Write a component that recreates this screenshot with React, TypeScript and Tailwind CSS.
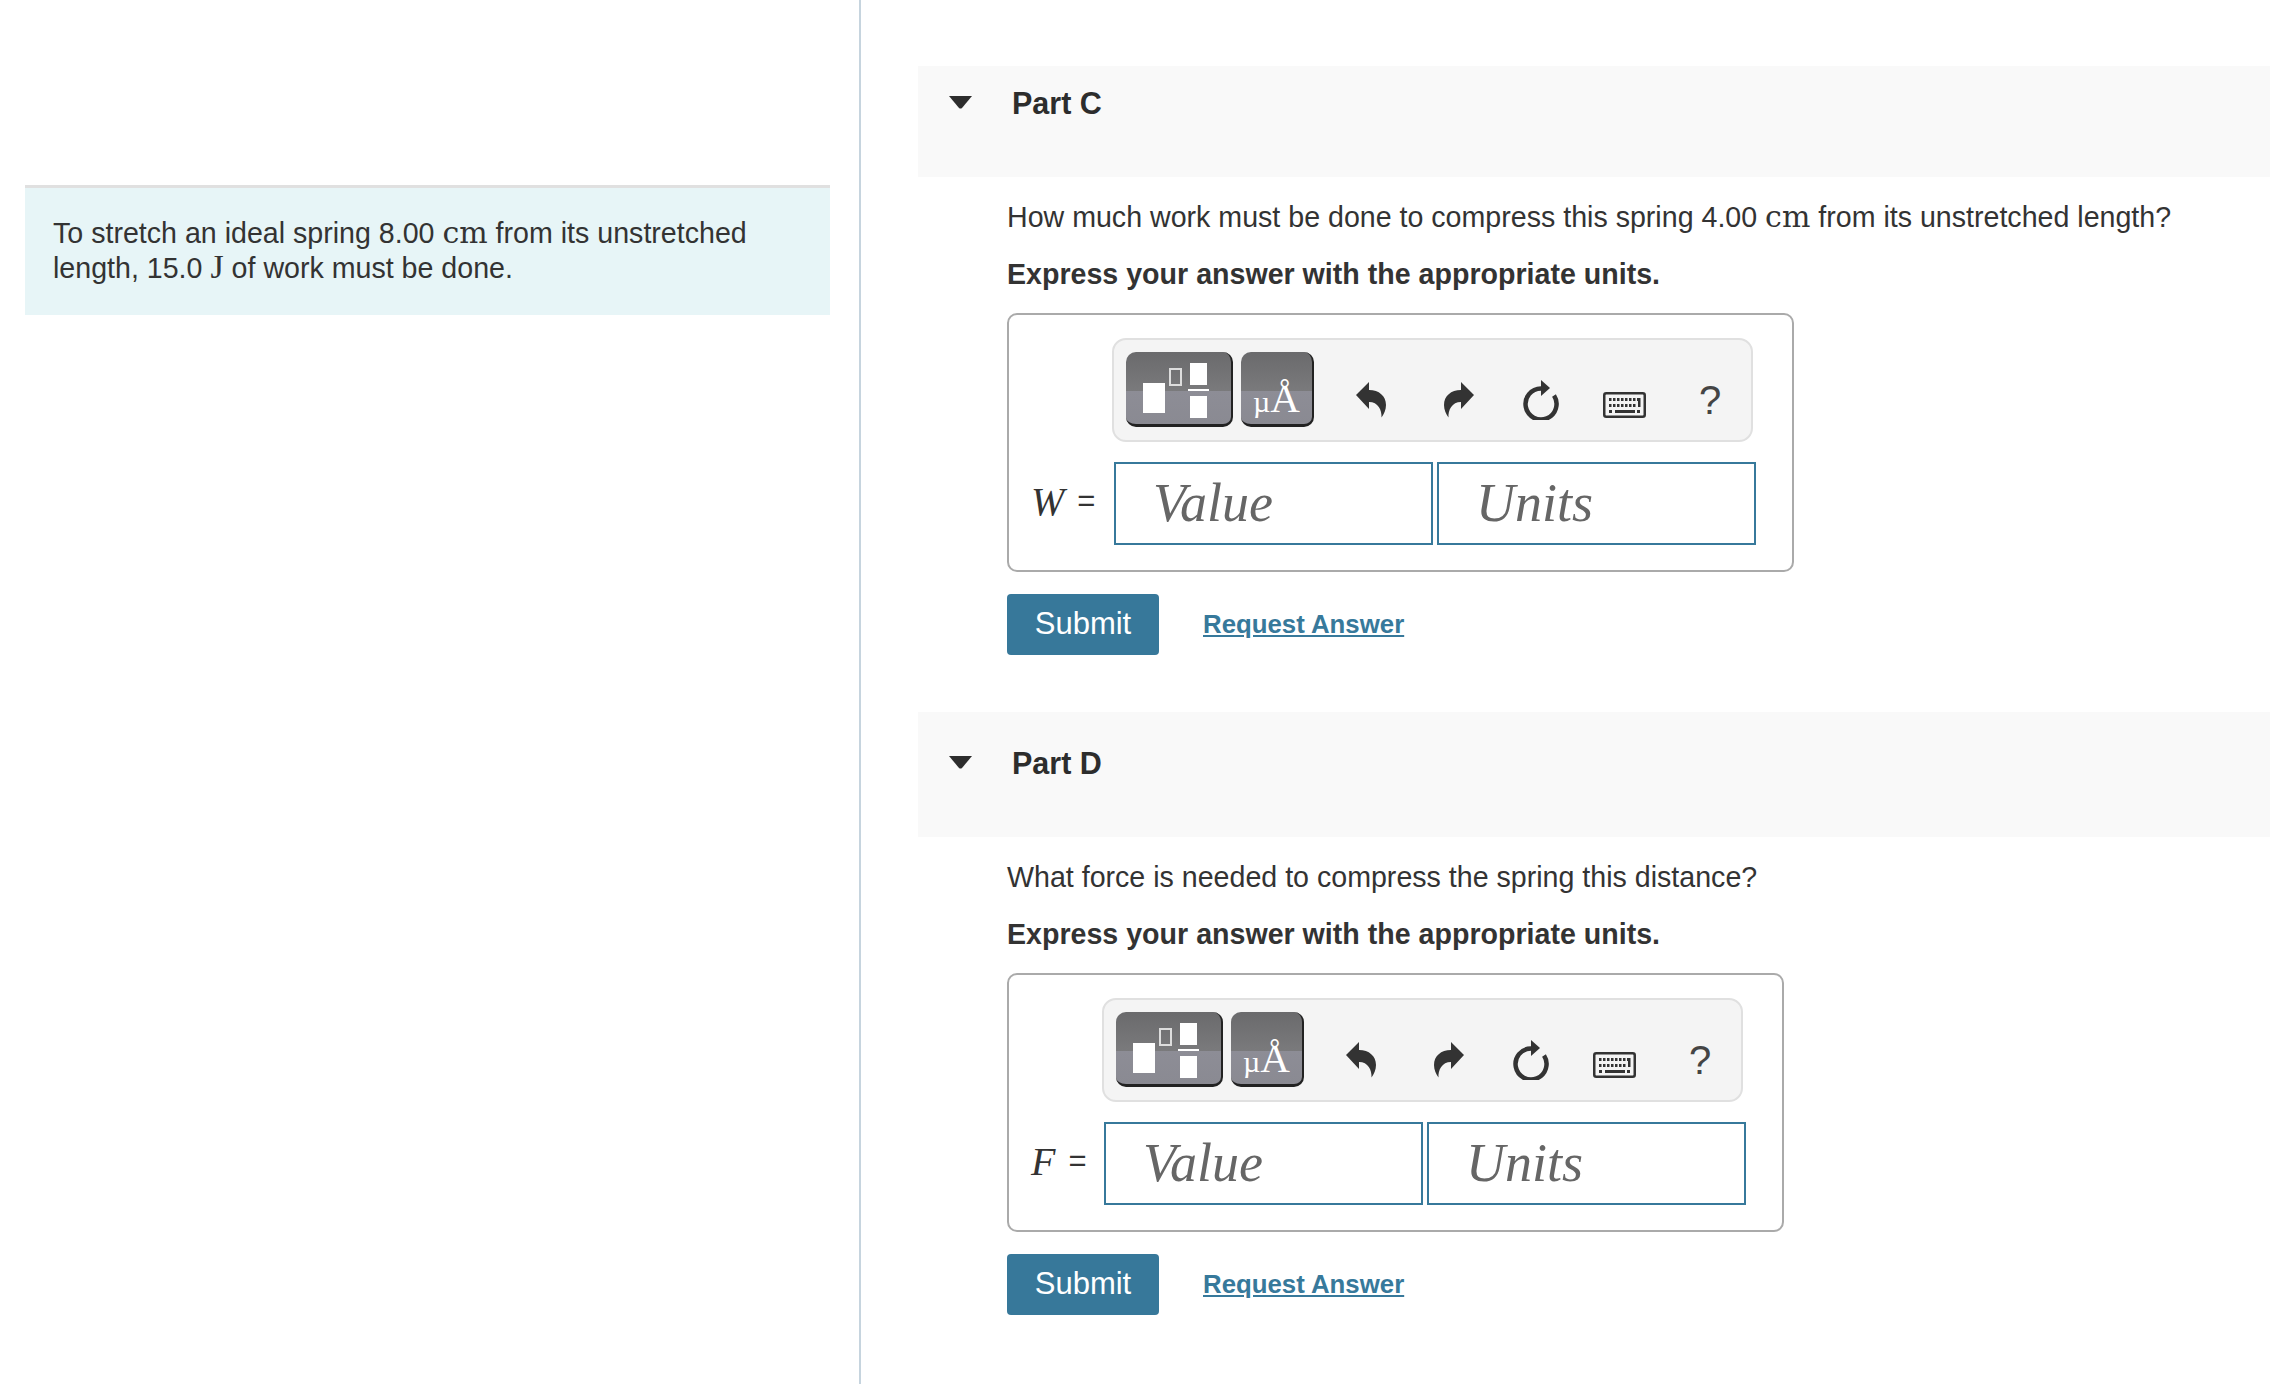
const sans = "font-['Liberation_Sans',Arial,sans-serif]";

function Cm() {
  return <span className="font-['DejaVu_Serif',serif] text-[30px] leading-[0]">cm</span>;
}

function Joule() {
  return <span className="font-['Liberation_Serif',serif] text-[34px] leading-[0]">J</span>;
}

function TemplatesButton() {
  return (
    <div className="relative h-[75px] w-[107px] rounded-[10px] border-b-[3px] border-r-2 border-[#222] bg-[linear-gradient(#6a6a6c,#7a7a7c_54%,#8d8d96_54%,#8a8a92)]">
      <div className="absolute left-[17px] top-[31px] h-[30px] w-[22px] bg-white" />
      <div className="absolute left-[43px] top-[16px] h-[18px] w-[13px] border-2 border-[#ddd]" />
      <div className="absolute left-[64px] top-[11px] h-[22px] w-[17px] bg-white" />
      <div className="absolute left-[62px] top-[37px] h-[2px] w-[21px] bg-white" />
      <div className="absolute left-[64px] top-[44px] h-[22px] w-[17px] bg-white" />
    </div>
  );
}

function SymbolsButton() {
  return (
    <div className="flex h-[75px] w-[73px] items-baseline justify-center rounded-[10px] border-b-[3px] border-r-2 border-[#222] bg-[linear-gradient(#6a6a6c,#7a7a7c_54%,#8d8d96_54%,#8a8a92)] pt-[26px] font-['Liberation_Serif',serif] leading-none text-white">
      <span className="text-[30px]">µ</span>
      <span className="text-[41px]">Å</span>
    </div>
  );
}

function UndoIcon({ flip }: { flip?: boolean }) {
  return (
    <svg className={flip ? "h-[36px] w-[30px] -scale-x-100" : "h-[36px] w-[30px]"} viewBox="0 0 30 36">
      <path d="M0 13 13 0v8c10 0 17 6 17 15 0 5-2 9-4.500 12.500C26 28 22 20 13 20v7z" fill="#333" />
    </svg>
  );
}

function ReloadIcon() {
  return (
    <svg className="h-[40px] w-[36px]" viewBox="0 0 36 40" fill="none">
      <path d="M18 8.500A15.500 15.500 0 1 0 31 15.500" stroke="#333" strokeWidth="4.500" />
      <path d="M18 0l9 8-9 8z" fill="#333" />
    </svg>
  );
}

function KeyboardIcon() {
  const top = [6, 10, 14, 18, 22, 26, 30, 34];
  const mid = [6, 10, 14, 18, 22, 26];
  return (
    <svg className="h-[26px] w-[43px]" viewBox="0 0 43 26">
      <rect x="1.250" y="1.250" width="40.500" height="23.500" rx="2" fill="none" stroke="#333" strokeWidth="2.500" />
      {top.map((x) => (
        <rect key={x} x={x} y="6" width="2.500" height="3" fill="#333" />
      ))}
      {mid.map((x) => (
        <rect key={x} x={x} y="12" width="2.500" height="3" fill="#333" />
      ))}
      <path d="M30 12h2.500v3H30zM35 6h2.500v9H35z" fill="#333" />
      <rect x="6" y="18" width="3" height="3" fill="#333" />
      <rect x="12" y="18" width="20" height="3" fill="#333" />
      <rect x="34" y="18" width="3" height="3" fill="#333" />
    </svg>
  );
}

function Toolbar() {
  return (
    <div className="-ml-[2px] flex h-[104px] w-[641px] items-start rounded-[14px] border-2 border-[#e0e0e0] bg-[#f4f4f4] pl-[12px] pt-[12px]">
      <TemplatesButton />
      <div className="ml-[8px]">
        <SymbolsButton />
      </div>
      <div className="ml-[42px] mt-[30px]">
        <UndoIcon />
      </div>
      <div className="ml-[58px] mt-[30px]">
        <UndoIcon flip />
      </div>
      <div className="ml-[49px] mt-[28px]">
        <ReloadIcon />
      </div>
      <div className="ml-[44px] mt-[40px]">
        <KeyboardIcon />
      </div>
      <div className="ml-[53px] mt-[26px] font-['Liberation_Sans',sans-serif] text-[40px] leading-[44px] text-[#444]">?</div>
    </div>
  );
}

function AnswerInput({ placeholder }: { placeholder: string }) {
  return (
    <input
      className="h-[83px] w-[319px] border-2 border-[#37799b] bg-white pb-[2px] pl-[37px] font-['Liberation_Serif',serif] text-[54px] italic outline-none placeholder:text-[#666]"
      placeholder={placeholder}
      readOnly
    />
  );
}

function Part({
  name,
  question,
  symbol,
  labelWidth,
  headerClass,
}: {
  name: string;
  question: React.ReactNode;
  symbol: string;
  labelWidth: string;
  headerClass: string;
}) {
  return (
    <section>
      <div className={`${headerClass} flex items-start bg-[#f9f9f9] pl-[31px]`}>
        <svg className="mt-[13px] h-[13px] w-[23px]" viewBox="0 0 23 13">
          <path d="M0 0h23L13 12q-1.500 1-3 0z" fill="#2d2d2d" />
        </svg>
        <h2 className="ml-[40px] text-[30.500px] leading-[40px] font-bold text-[#2d2d2d]">{name}</h2>
      </div>
      <div className="ml-[89px] pt-[18px]">
        <p className="text-[28.600px] leading-[44px] text-[#333]">{question}</p>
        <p className="mt-[13px] text-[28.600px] leading-[44px] font-bold text-[#333]">
          Express your answer with the appropriate units.
        </p>
        <div className="mt-[17px] flex w-fit items-end rounded-[10px] border-2 border-[#aaa] pb-[25px] pl-[22px] pr-[36px] pt-[23px]">
          <div className={`${labelWidth} flex h-[83px] items-center gap-[13px] pb-[4px]`}>
            <span className="font-['Liberation_Serif',serif] text-[40px] italic text-[#333]">{symbol}</span>
            <span className="text-[31px] text-[#333]">=</span>
          </div>
          <div className="flex flex-col gap-[20px]">
            <Toolbar />
            <div className="flex gap-[4px]">
              <AnswerInput placeholder="Value" />
              <AnswerInput placeholder="Units" />
            </div>
          </div>
        </div>
        <div className="mt-[22px] flex items-center">
          <button className="h-[61px] w-[152px] rounded-[4px] bg-[#37789a] text-[31px] text-white">Submit</button>
          <a className="ml-[44px] text-[25.800px] font-bold text-[#37799b] underline" href="#">
            Request Answer
          </a>
        </div>
      </div>
    </section>
  );
}

export default function App() {
  return (
    <div className={`${sans} flex h-[1384px] w-full overflow-hidden bg-white`}>
      <aside className="w-[861px] shrink-0 border-r-2 border-[#c6d4de] pl-[25px] pr-[29px] pt-[185px]">
        <div className="h-[130px] border-t-[3px] border-[#e0e0e0] bg-[#e7f5f7] pl-[28px] pr-[60px] pt-[28px] text-[28.600px] leading-[35px] text-[#333]">
          To stretch an ideal spring 8.00 <Cm /> from its unstretched length, 15.0 <Joule /> of work must be done.
        </div>
      </aside>
      <main className="min-w-0 flex-1 pl-[57px] pt-[66px]">
        <Part
          name="Part C"
          headerClass="h-[111px] pt-[17px]"
          labelWidth="w-[83px]"
          symbol="W"
          question={
            <>
              How much work must be done to compress this spring 4.00 <Cm /> from its unstretched length?
            </>
          }
        />
        <div className="h-[57px]" />
        <Part
          name="Part D"
          headerClass="h-[125px] pt-[31px]"
          labelWidth="w-[73px]"
          symbol="F"
          question="What force is needed to compress the spring this distance?"
        />
      </main>
    </div>
  );
}
